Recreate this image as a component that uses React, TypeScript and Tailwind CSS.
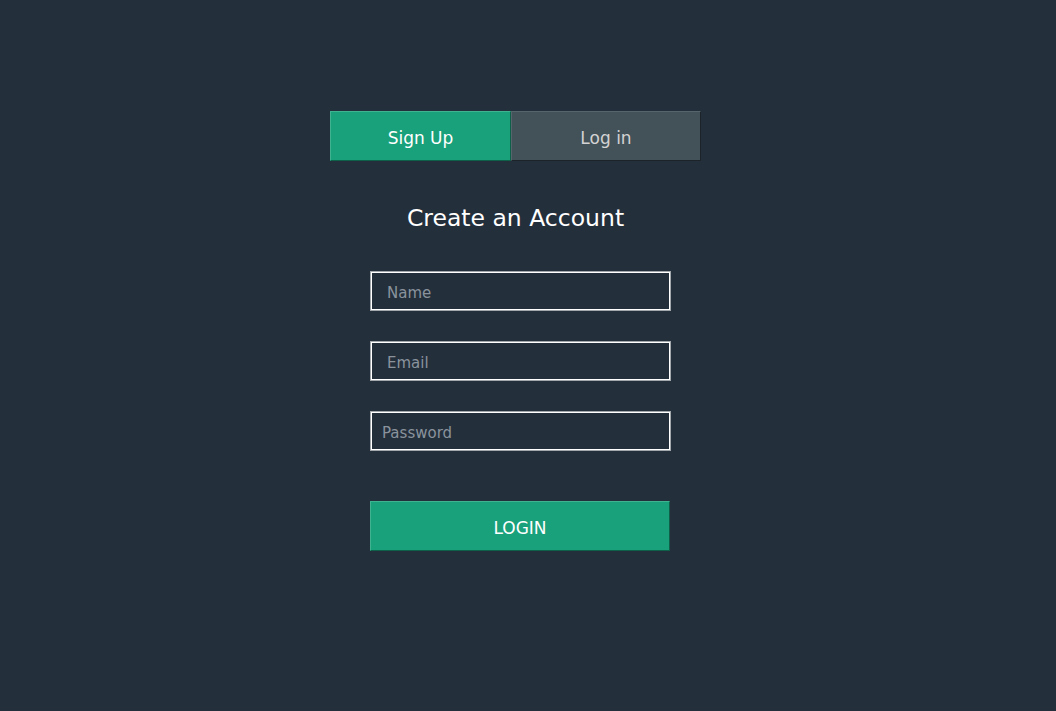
export default function App() {
  const font = { fontFamily: '"DejaVu Sans", Verdana, sans-serif' };
  const field =
    "h-[40px] w-[301px] border border-[#a3a8ad] bg-transparent pt-[3px] text-[15px] text-white shadow-[inset_0_0_0_1px_#ffffff] outline-none placeholder:text-[#8a939c]";
  return (
    <div className="min-h-[711px] w-full bg-[#242f3c] pl-[330px] pt-[111px]" style={font}>
      <div className="w-[371px]">
        <div className="flex">
          <button className="h-[50px] w-[181px] border border-t-[#3fb38f] border-l-[#3fb38f] border-b-[#0e6048] border-r-[#0e6048] bg-[#19a17b] pt-[5px] text-[17px] text-white">
            Sign Up
          </button>
          <button className="h-[50px] w-[190px] border border-t-[#56656c] border-l-[#56656c] border-b-[#1c2429] border-r-[#1c2429] bg-[#435259] pt-[5px] text-[17px] text-[#d3d3d3]">
            Log in
          </button>
        </div>
        <h1 className="mt-[43px] text-center text-[23.5px] leading-[28px] text-white">Create an Account</h1>
        <form className="ml-[40px] mt-[39px] flex w-[301px] flex-col gap-[30px]">
          <input placeholder="Name" className={field + " pl-[16px]"} />
          <input placeholder="Email" className={field + " pl-[16px]"} />
          <input placeholder="Password" type="password" className={field + " pl-[11px]"} />
          <button
            type="button"
            className="mt-[20px] h-[50px] w-[300px] border border-t-[#3fb38f] border-l-[#3fb38f] border-b-[#0e6048] border-r-[#0e6048] bg-[#19a17b] pt-[5px] text-[17px] text-white"
          >
            LOGIN
          </button>
        </form>
      </div>
    </div>
  );
}
